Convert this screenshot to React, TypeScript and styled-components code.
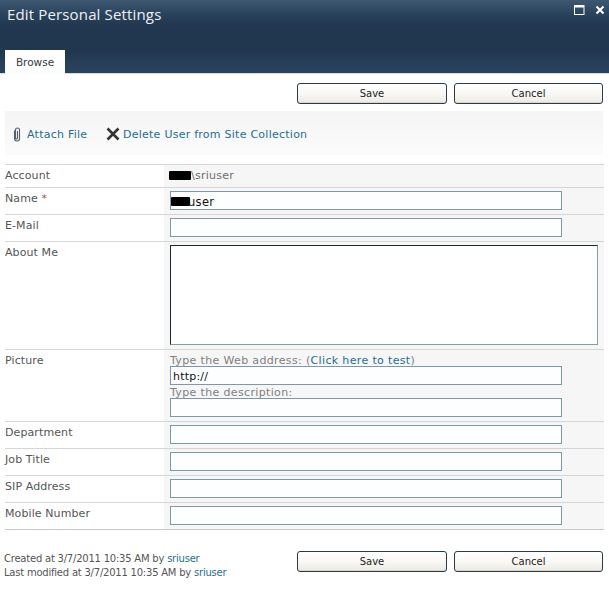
import React from "react";
import styled, {createGlobalStyle} from "styled-components";

const GlobalStyle = createGlobalStyle`
	html, body {
		margin: 0;
		padding: 0;
		background: #fff;
		font-family: "DejaVu Sans", Verdana, sans-serif;
		font-size: 11px;
		color: #525252;
	}
`;

const Page = styled.div`
	width: 609px;
	height: 613px;
	overflow: hidden;
	display: flex;
	flex-direction: column;
`;

const Ribbon = styled.div`
	height: 74px;
	flex: none;
	box-sizing: border-box;
	padding: 5px 0 0 7px;
	display: flex;
	flex-direction: column;
	justify-content: space-between;
	background: linear-gradient(#3f5872 0, #2a435c 14px, #21374f 26px, #21374f 50px, #2b445e 73px);
	border-bottom: 1px solid #d5dce3;
`;

const TitleRow = styled.div`
	display: flex;
	justify-content: space-between;
	align-items: flex-start;
`;

const Title = styled.div`
	font-family: "Open Sans", sans-serif;
	font-size: 15px;
	line-height: 19px;
	color: #eef2f6;
	letter-spacing: 0.15px;
`;

const WindowButtons = styled.div`
	display: flex;
	gap: 10px;
	padding: 0 4px 0 0;
	color: #fff;
`;

const Tab = styled.div`
	width: 60px;
	height: 24px;
	margin-left: -2px;
	margin-bottom: -1px;
	box-sizing: border-box;
	background: linear-gradient(#fff, #fbfcfc);
	color: #3b3b3b;
	font-size: 10.5px;
	line-height: 25px;
	text-align: center;
`;

const ButtonRow = styled.div<{$top: number}>`
	display: flex;
	justify-content: flex-end;
	gap: 7px;
	padding: ${p => p.$top}px 6px 0 0;
`;

const Button = styled.button<{$width: number}>`
	width: ${p => p.$width}px;
	height: 21px;
	padding: 0;
	box-sizing: border-box;
	border: 1px solid #2b3a44;
	border-radius: 3px;
	background: linear-gradient(#ffffff, #f8f7f3 55%, #ece9e2);
	box-shadow: inset 0 -1px 0 #d8d6d0;
	color: #222;
	font-family: "DejaVu Sans", Verdana, sans-serif;
	font-size: 10px;
`;

const Toolbar = styled.div`
	margin: 7px 6px 0 5px;
	height: 44px;
	display: flex;
	align-items: center;
	background: linear-gradient(#f5f5f5, #fbfbfb);
	padding: 2px 0 0 7px;
	box-sizing: border-box;
`;

const ToolItem = styled.a<{$gap: number; $width: number}>`
	display: flex;
	align-items: center;
	gap: ${p => p.$gap}px;
	width: ${p => p.$width}px;
	color: #1f6f8f;
	font-size: 11px;
	letter-spacing: 0.25px;
`;

const Form = styled.div`
	margin: 9px 5px 0 5px;
	width: 599px;
	border-top: 1px solid #d6d6d6;
	border-bottom: 1px solid #c8c8c8;
`;

const Row = styled.div<{$height: number}>`
	height: ${p => p.$height}px;
	box-sizing: border-box;
	display: grid;
	grid-template-columns: 159px 1fr;
	border-top: 1px solid #d6d6d6;
	&:first-child {
		border-top: none;
	}
`;

const Label = styled.div`
	padding: 3px 0 0 0;
	line-height: 15px;
	color: #555;
	letter-spacing: 0.1px;
`;

const Required = styled.span`
	color: #c44;
`;

const Field = styled.div`
	background: #f6f6f6;
	padding: 3px 0 0 6px;
	display: flex;
	flex-direction: column;
	align-items: flex-start;
`;

const Input = styled.div`
	width: 392px;
	height: 19px;
	flex: none;
	box-sizing: border-box;
	border: 1px solid #7d98a8;
	background: #fcfeff;
	color: #111;
	font-size: 11px;
	letter-spacing: 0.2px;
	padding: 2px 0 0 2px;
	display: flex;
	align-items: center;
`;

const TextArea = styled.div`
	width: 428px;
	height: 100px;
	box-sizing: border-box;
	border: 1px solid #1f2a30;
	border-bottom-color: #8b9aa3;
	border-right-color: #8b9aa3;
	background: #fff;
`;

const Plain = styled.div`
	line-height: 15px;
	color: #6d6d6d;
	letter-spacing: 0.25px;
	display: flex;
	align-items: center;
`;

const Hint = styled.div`
	line-height: 16px;
	margin-bottom: -3px;
	color: #808080;
	font-size: 11px;
	letter-spacing: 0.35px;
`;

const HintLink = styled.span`
	color: #1f6f8f;
`;

const Redacted = styled.span<{$width: number; $left: number; $right: number}>`
	display: inline-block;
	width: ${p => p.$width}px;
	height: 9px;
	margin: 0 ${p => p.$right}px 0 ${p => p.$left}px;
	background: #000;
	border-radius: 1px;
`;

const InputText = styled.span`
	font-size: 11.5px;
	letter-spacing: 0.3px;
`;

const Footer = styled.div`
	display: flex;
	justify-content: space-between;
	align-items: flex-start;
	margin: 21px 0 0 4px;
`;

const Meta = styled.div`
	font-size: 10px;
	line-height: 14px;
	padding-top: 1px;
	color: #555;
	letter-spacing: -0.22px;
`;

const MetaLink = styled.span`
	color: #1f6f8f;
`;

const Paperclip = () => (
	<svg width="10" height="15" viewBox="0 0 10 15" fill="none" stroke="#55606a" strokeWidth="1.1">
		<path d="M2.5 3.5v8a2.5 2.5 0 0 0 5 0V3a2 2 0 0 0-4 0v8a.9.9 0 0 0 2 0V4" />
	</svg>
);

const DeleteIcon = () => (
	<svg width="14" height="14" viewBox="0 0 14 14" stroke="#333" strokeWidth="2.6">
		<path d="M1.5 1.5l11 11M12.5 1.5l-11 11" />
	</svg>
);

const MaximizeIcon = () => (
	<svg width="11" height="10" viewBox="0 0 11 10" fill="none" stroke="#fff">
		<rect x=".5" y=".5" width="9.5" height="9" />
		<path d="M.5 1.5h9.5" strokeWidth="2" />
	</svg>
);

const CloseIcon = () => (
	<svg width="10" height="10" viewBox="0 0 10 10" stroke="#fff" strokeWidth="2">
		<path d="M1.5 1.5l7 7M8.5 1.5l-7 7" />
	</svg>
);

const plainRows = [
	{label: "Department", height: 27},
	{label: "Job Title", height: 27},
	{label: "SIP Address", height: 27},
	{label: "Mobile Number", height: 27}
];

export default function App() {
	return (
		<Page>
			<GlobalStyle />
			<Ribbon>
				<TitleRow>
					<Title>Edit Personal Settings</Title>
					<WindowButtons>
						<MaximizeIcon />
						<CloseIcon />
					</WindowButtons>
				</TitleRow>
				<Tab>Browse</Tab>
			</Ribbon>
			<ButtonRow $top={9}>
				<Button $width={150}>Save</Button>
				<Button $width={149}>Cancel</Button>
			</ButtonRow>
			<Toolbar>
				<ToolItem $gap={5} $width={94}>
					<Paperclip />
					Attach File
				</ToolItem>
				<ToolItem $gap={3} $width={220}>
					<DeleteIcon />
					Delete User from Site Collection
				</ToolItem>
			</Toolbar>
			<Form>
				<Row $height={22}>
					<Label>Account</Label>
					<Field>
						<Plain>
							<Redacted $width={22} $left={-1} $right={0} />\sriuser
						</Plain>
					</Field>
				</Row>
				<Row $height={27}>
					<Label>
						Name <Required>*</Required>
					</Label>
					<Field>
						<Input>
							<Redacted $width={19} $left={-2} $right={-2} />
							<InputText>user</InputText>
						</Input>
					</Field>
				</Row>
				<Row $height={27}>
					<Label>E-Mail</Label>
					<Field>
						<Input />
					</Field>
				</Row>
				<Row $height={108}>
					<Label>About Me</Label>
					<Field>
						<TextArea />
					</Field>
				</Row>
				<Row $height={72}>
					<Label>Picture</Label>
					<Field>
						<Hint>
							Type the Web address: (<HintLink>Click here to test</HintLink>)
						</Hint>
						<Input>http://</Input>
						<Hint>Type the description:</Hint>
						<Input />
					</Field>
				</Row>
				{plainRows.map(row => (
					<Row key={row.label} $height={row.height}>
						<Label>{row.label}</Label>
						<Field>
							<Input />
						</Field>
					</Row>
				))}
			</Form>
			<Footer>
				<Meta>
					Created at 3/7/2011 10:35 AM by <MetaLink>sriuser</MetaLink>
					<br />
					Last modified at 3/7/2011 10:35 AM by <MetaLink>sriuser</MetaLink>
				</Meta>
				<ButtonRow $top={0}>
					<Button $width={150}>Save</Button>
					<Button $width={149}>Cancel</Button>
				</ButtonRow>
			</Footer>
		</Page>
	);
}
